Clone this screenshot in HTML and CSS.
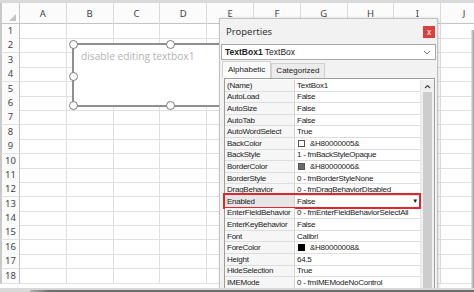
FILE: index.html
```html
<!DOCTYPE html>
<html lang="en">
  <head>
    <meta charset="UTF-8" />
    <title>Properties - TextBox1</title>
    <link rel="stylesheet" href="styles.css">
  </head>
  <body>
    <div class="screen">
      <div class="ribbon-edge"></div>
      <div class="sheet">
        <div class="corner"><span class="corner-mark"></span></div>
        <div class="col-head">A</div>
        <div class="col-head">B</div>
        <div class="col-head">C</div>
        <div class="col-head">D</div>
        <div class="col-head">E</div>
        <div class="col-head">F</div>
        <div class="col-head">G</div>
        <div class="col-head">H</div>
        <div class="col-head">I</div>
        <div class="col-head">J</div>
      </div>
      <div class="rows" id="rows"></div>

      <!-- text box drawn on the sheet, selected -->
      <div class="shape-box">
        <span class="shape-text">disable editing textbox1</span>
        <span class="handle h-tl"></span>
        <span class="handle h-tc"></span>
        <span class="handle h-ml"></span>
        <span class="handle h-bl"></span>
        <span class="handle h-bc"></span>
      </div>

      <div class="props">
        <div class="props-title">
          <span>Properties</span>
          <span class="close">x</span>
        </div>
        <div class="object-select">
          <span><b>TextBox1</b> TextBox</span>
          <svg width="8" height="5" viewBox="0 0 8 5"><path d="M1 1l3 3 3-3" fill="none" stroke="#777" stroke-width="1"/></svg>
        </div>
        <div class="tabs">
          <span class="tab active">Alphabetic</span>
          <span class="tab">Categorized</span>
        </div>
        <div class="prop-wrap">
          <div class="prop-grid">
            <div class="pn">(Name)</div><div class="pv">TextBox1</div>
            <div class="pn">AutoLoad</div><div class="pv">False</div>
            <div class="pn">AutoSize</div><div class="pv">False</div>
            <div class="pn">AutoTab</div><div class="pv">False</div>
            <div class="pn">AutoWordSelect</div><div class="pv">True</div>
            <div class="pn">BackColor</div><div class="pv"><span class="swatch sw-white"></span>&amp;H80000005&amp;</div>
            <div class="pn">BackStyle</div><div class="pv">1 - fmBackStyleOpaque</div>
            <div class="pn">BorderColor</div><div class="pv"><span class="swatch sw-gray"></span>&amp;H80000006&amp;</div>
            <div class="pn">BorderStyle</div><div class="pv">0 - fmBorderStyleNone</div>
            <div class="pn">DragBehavior</div><div class="pv">0 - fmDragBehaviorDisabled</div>
            <div class="pn selected">Enabled</div><div class="pv selected-val">False<span class="drop">&#9660;</span><span class="highlight"></span></div>
            <div class="pn">EnterFieldBehavior</div><div class="pv">0 - fmEnterFieldBehaviorSelectAll</div>
            <div class="pn">EnterKeyBehavior</div><div class="pv">False</div>
            <div class="pn">Font</div><div class="pv">Calibri</div>
            <div class="pn">ForeColor</div><div class="pv"><span class="swatch sw-black"></span>&amp;H80000008&amp;</div>
            <div class="pn">Height</div><div class="pv">64.5</div>
            <div class="pn">HideSelection</div><div class="pv">True</div>
            <div class="pn">IMEMode</div><div class="pv">0 - fmIMEModeNoControl</div>
          </div>
          <div class="scrollbar">
            <div class="scroll-up">
              <svg width="7" height="5" viewBox="0 0 7 5"><path d="M1 4l2.5-2.5L6 4" fill="none" stroke="#444" stroke-width="1.2"/></svg>
            </div>
            <div class="scroll-thumb"></div>
          </div>
        </div>
      </div>

      <div class="edge-shadow"></div>
      <div class="bottom-shadow"></div>
    </div>

    <script>
      const rows = document.getElementById('rows');
      for (let i = 1; i <= 18; i++) {
        const row = document.createElement('div');
        row.classList.add('row');
        const head = document.createElement('div');
        head.classList.add('row-head');
        head.textContent = i;
        row.appendChild(head);
        for (let c = 0; c < 10; c++) {
          const cell = document.createElement('div');
          cell.classList.add('cell');
          row.appendChild(cell);
        }
        rows.appendChild(row);
      }
    </script>
  </body>
</html>
```

FILE: styles.css
```css
body {
  margin: 0;
  background-color: #fff;
  font-family: 'Liberation Sans', Arial, sans-serif;
  color: #222;
}
.screen {
  position: relative;
  width: 474px;
  height: 292px;
  overflow: hidden;
  background-color: #fff;
}
.ribbon-edge {
  height: 3px;
  background-color: #d9d9d9;
}
.sheet,
.row {
  display: grid;
  grid-template-columns: 20px repeat(10, 46.8px);
}
.sheet {
  height: 21px;
  border-bottom: 1px solid #c4c4c4;
  box-sizing: border-box;
  background-color: #fbfbfb;
}
.corner {
  border-right: 1px solid #c8c8c8;
  border-left: 2px solid #c9c9c9;
  position: relative;
}
.corner-mark {
  position: absolute;
  right: 3px;
  bottom: 3px;
  width: 0;
  height: 0;
  border-left: 7px solid transparent;
  border-bottom: 7px solid #c4c4c4;
}
.col-head {
  border-right: 1px solid #dadada;
  font-family: 'Noto Sans', sans-serif;
  font-size: 9.5px;
  color: #444;
  text-align: center;
  line-height: 21px;
}
.row {
  height: 14.4px;
}
.row-head {
  border-left: 2px solid #c9c9c9;
  border-right: 1px solid #c0c0c0;
  border-bottom: 1px solid #e2e2e2;
  background-color: #fbfbfb;
  font-family: 'Noto Sans', sans-serif;
  font-size: 9.5px;
  color: #444;
  text-align: center;
  line-height: 14px;
  box-sizing: border-box;
}
.cell {
  border-right: 1px solid #e0e0e0;
  border-bottom: 1px solid #e0e0e0;
  box-sizing: border-box;
}

/* selected text box on the sheet */
.shape-box {
  position: absolute;
  left: 72px;
  top: 43px;
  width: 170px;
  height: 64px;
  border: 2px solid #8f8f8f;
  box-sizing: border-box;
  background-color: #fff;
}
.shape-text {
  display: block;
  padding: 4px 0 0 7px;
  font-family: 'Open Sans', sans-serif;
  font-size: 10.2px;
  color: #b3b3b3;
}
.handle {
  position: absolute;
  width: 7px;
  height: 7px;
  border: 1px solid #7a7a7a;
  border-radius: 50%;
  background-color: #fff;
}
.h-tl { left: -5px; top: -5px; }
.h-tc { left: 92px; top: -5px; }
.h-ml { left: -5px; top: 27px; }
.h-bl { left: -5px; bottom: -5px; }
.h-bc { left: 92px; bottom: -5px; }

/* properties window */
.props {
  position: absolute;
  left: 219px;
  top: 18px;
  width: 219px;
  height: 290px;
  background-color: #f2f2f2;
  border: 1px solid #c2c2c2;
  box-sizing: border-box;
  box-shadow: 1px 0 3px rgba(0, 0, 0, 0.15);
}
.props-title {
  display: flex;
  justify-content: space-between;
  align-items: center;
  height: 25px;
  padding: 0 2px 0 6px;
  font-family: 'Noto Sans', sans-serif;
  font-size: 9.5px;
  color: #333;
}
.close {
  width: 12px;
  height: 12px;
  background-color: #d9413f;
  color: #fff;
  font-size: 8px;
  line-height: 11px;
  text-align: center;
}
.object-select {
  display: flex;
  justify-content: space-between;
  align-items: center;
  height: 14px;
  margin: 0 1px 0 1px;
  padding: 0 4px 0 3px;
  background-color: #fff;
  border: 1px solid #a9a9a9;
  font-size: 8.5px;
  color: #222;
}
.tabs {
  display: flex;
  align-items: flex-end;
  height: 18px;
  margin-left: 2px;
  font-size: 8px;
}
.tab {
  padding: 2px 4px 3px;
  border: 1px solid #d0d0d0;
  border-bottom: none;
  background-color: #ececec;
}
.tab.active {
  padding: 3px 5px 4px;
  background-color: #fafafa;
}
.prop-wrap {
  display: flex;
  margin: 0 2px 0 4px;
  border: 1px solid #9e9e9e;
  padding-top: 1px;
  background-color: #fff;
}
.prop-grid {
  display: grid;
  grid-template-columns: 70px 125px;
  grid-auto-rows: 11.6px;
  font-size: 8px;
  letter-spacing: -0.25px;
  color: #1a1a1a;
}
.pn,
.pv {
  position: relative;
  display: flex;
  align-items: center;
  padding-left: 2px;
  border-bottom: 1px solid #dedede;
  box-sizing: border-box;
  white-space: nowrap;
  overflow: visible;
}
.pn {
  border-right: 1px solid #d2d2d2;
  background-color: #f6f6f6;
}
.pn.selected {
  background-color: #e6e6e6;
}
.swatch {
  width: 7px;
  height: 7px;
  margin: 0 5px 0 1px;
  border: 1px solid #555;
  box-sizing: border-box;
}
.sw-white { background-color: #fff; }
.sw-gray { background-color: #6a6a6a; }
.sw-black { background-color: #000; border-color: #000; }
.drop {
  position: absolute;
  right: 2px;
  top: 2px;
  font-size: 6px;
  color: #111;
}
.highlight {
  position: absolute;
  left: -72px;
  right: -1px;
  top: -3px;
  bottom: -2px;
  border: 2px solid #e0262d;
}
.scrollbar {
  width: 13px;
  background-color: #f0f0f0;
  border-left: 1px solid #e6e6e6;
}
.scroll-up {
  height: 12px;
  display: flex;
  align-items: center;
  justify-content: center;
}
.scroll-thumb {
  height: 220px;
  margin: 0 2px;
  background-color: #cdcdcd;
}
.edge-shadow {
  position: absolute;
  right: 0;
  top: 30px;
  bottom: 0;
  width: 3px;
  background: linear-gradient(to right, #e8e8e8, #9a9a9a);
}
.bottom-shadow {
  position: absolute;
  left: 0;
  right: 0;
  bottom: 0;
  height: 4px;
  background-color: #d9d9d9;
}
.bottom-shadow::after {
  content: '';
  position: absolute;
  left: 30px;
  right: 0;
  bottom: 0;
  height: 2px;
  background: linear-gradient(to right, #b0b0b0, #6d6d6d 20px);
}
```
